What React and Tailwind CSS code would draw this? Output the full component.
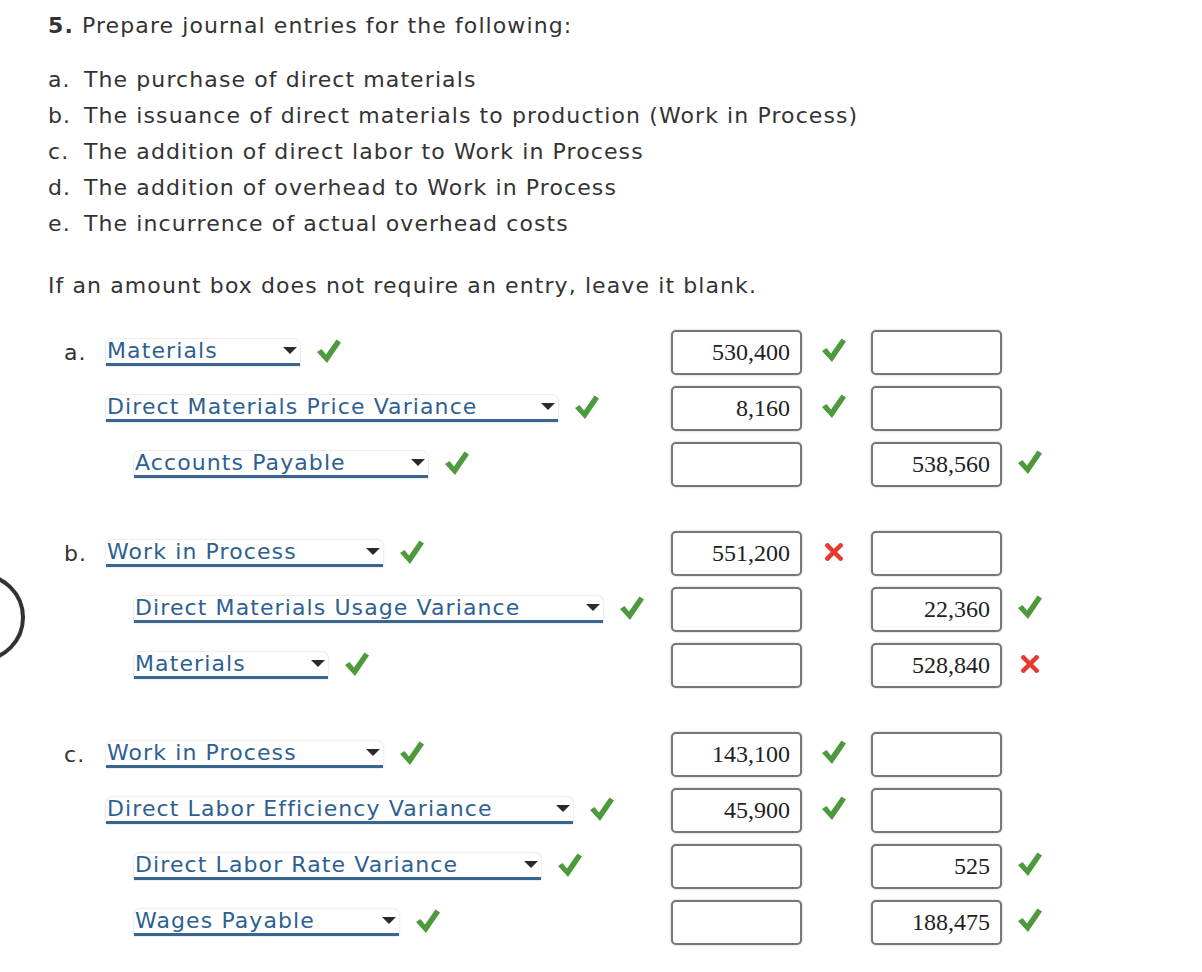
const sections = [
  {
    label: "a.",
    rows: [
      { account: "Materials", indent: false, width: 194, debit: "530,400", debitMark: "ok" },
      { account: "Direct Materials Price Variance", indent: false, width: 452, debit: "8,160", debitMark: "ok" },
      { account: "Accounts Payable", indent: true, width: 294, credit: "538,560", creditMark: "ok" },
    ],
  },
  {
    label: "b.",
    rows: [
      { account: "Work in Process", indent: false, width: 277, debit: "551,200", debitMark: "bad" },
      { account: "Direct Materials Usage Variance", indent: true, width: 469, credit: "22,360", creditMark: "ok" },
      { account: "Materials", indent: true, width: 194, credit: "528,840", creditMark: "bad" },
    ],
  },
  {
    label: "c.",
    rows: [
      { account: "Work in Process", indent: false, width: 277, debit: "143,100", debitMark: "ok" },
      { account: "Direct Labor Efficiency Variance", indent: false, width: 467, debit: "45,900", debitMark: "ok" },
      { account: "Direct Labor Rate Variance", indent: true, width: 407, credit: "525", creditMark: "ok" },
      { account: "Wages Payable", indent: true, width: 265, credit: "188,475", creditMark: "ok" },
    ],
  },
];

const Check = () => (
  <svg width="24" height="25" viewBox="0 0 24 25" className="shrink-0">
    <polygon points="0,13 4.5,10 9,15.5 19.5,0.5 24,3.5 10,24" fill="#4d9a3c" />
  </svg>
);

const Cross = () => (
  <svg width="18" height="18" viewBox="0 0 18 18" className="shrink-0">
    <path d="M2.5 2.5 L15.5 15.5 M15.5 2.5 L2.5 15.5" stroke="#e8392c" strokeWidth="4.5" strokeLinecap="square" />
  </svg>
);

const Mark = ({ type }) => (type === "ok" ? <Check /> : type === "bad" ? <Cross /> : null);

const Dropdown = ({ text, width }) => (
  <div
    className="relative h-[27px] bg-white rounded-t-[6px] border-b-[3px] border-[#3a6592] shadow-[0_0_2px_rgba(0,0,0,0.25)] flex items-center overflow-hidden"
    style={{ width }}
  >
    <span className="text-[22px] leading-none tracking-[1.1px] text-[#2e5f92] pl-[1px] whitespace-nowrap">{text}</span>
    <svg width="14" height="7" viewBox="0 0 14 7" className="absolute right-[3px] top-[8px]">
      <polygon points="0,0 14,0 7,7" fill="#2a2a2a" />
    </svg>
  </div>
);

const AmountBox = ({ value }) => (
  <div className="w-[131px] h-[45px] rounded-[5px] border-2 border-[#777] bg-white shadow-[0_0_2px_rgba(0,0,0,0.3)] flex items-center justify-end pr-[10px] text-[24px] text-[#222] font-['Liberation_Serif',serif]">
    {value}
  </div>
);

const EntryRow = ({ label, row }) => (
  <div className="flex items-center h-[44px]">
    <div className="w-[623px] flex items-center">
      <span className="w-[58px] pl-[16px] text-[22px] tracking-[1.1px] text-[#333]">{label}</span>
      <div className={row.indent ? "pl-[28px] flex items-center" : "flex items-center"}>
        <Dropdown text={row.account} width={row.width} />
        <div className="ml-[17px] -mt-[2px]">
          <Check />
        </div>
      </div>
    </div>
    <AmountBox value={row.debit} />
    <div className="w-[69px] flex justify-center pr-[6px] -mt-[3px]">
      <Mark type={row.debitMark} />
    </div>
    <AmountBox value={row.credit} />
    <div className="w-[62px] flex justify-center pr-[6px] -mt-[3px]">
      <Mark type={row.creditMark} />
    </div>
  </div>
);

export default function App() {
  return (
    <div className="relative w-[1202px] h-[972px] bg-white overflow-hidden font-['DejaVu_Sans',Verdana,sans-serif] text-[#333]">
      {/* partial circle on the left edge */}
      <div className="absolute left-[-64px] top-[573px] w-[89px] h-[89px] rounded-full border-[4px] border-[#333]" />

      <div className="pl-[48px] pt-[12px] text-[22px] tracking-[1.1px]">
        <h2 className="leading-[28px]">
          <span className="font-bold">5.</span> Prepare journal entries for the following:
        </h2>

        <ul className="mt-[22px] leading-[36px]">
          {[
            ["a.", "The purchase of direct materials"],
            ["b.", "The issuance of direct materials to production (Work in Process)"],
            ["c.", "The addition of direct labor to Work in Process"],
            ["d.", "The addition of overhead to Work in Process"],
            ["e.", "The incurrence of actual overhead costs"],
          ].map(([l, t]) => (
            <li key={l} className="flex">
              <span className="w-[36px]">{l}</span>
              <span>{t}</span>
            </li>
          ))}
        </ul>

        <p className="mt-[26px] leading-[36px]">If an amount box does not require an entry, leave it blank.</p>
      </div>

      <div className="mt-[26px] pl-[48px] flex flex-col gap-[45px]">
        {sections.map((s) => (
          <div key={s.label} className="flex flex-col gap-[12px]">
            {s.rows.map((r, i) => (
              <EntryRow key={i} label={i === 0 ? s.label : ""} row={r} />
            ))}
          </div>
        ))}
      </div>
    </div>
  );
}
